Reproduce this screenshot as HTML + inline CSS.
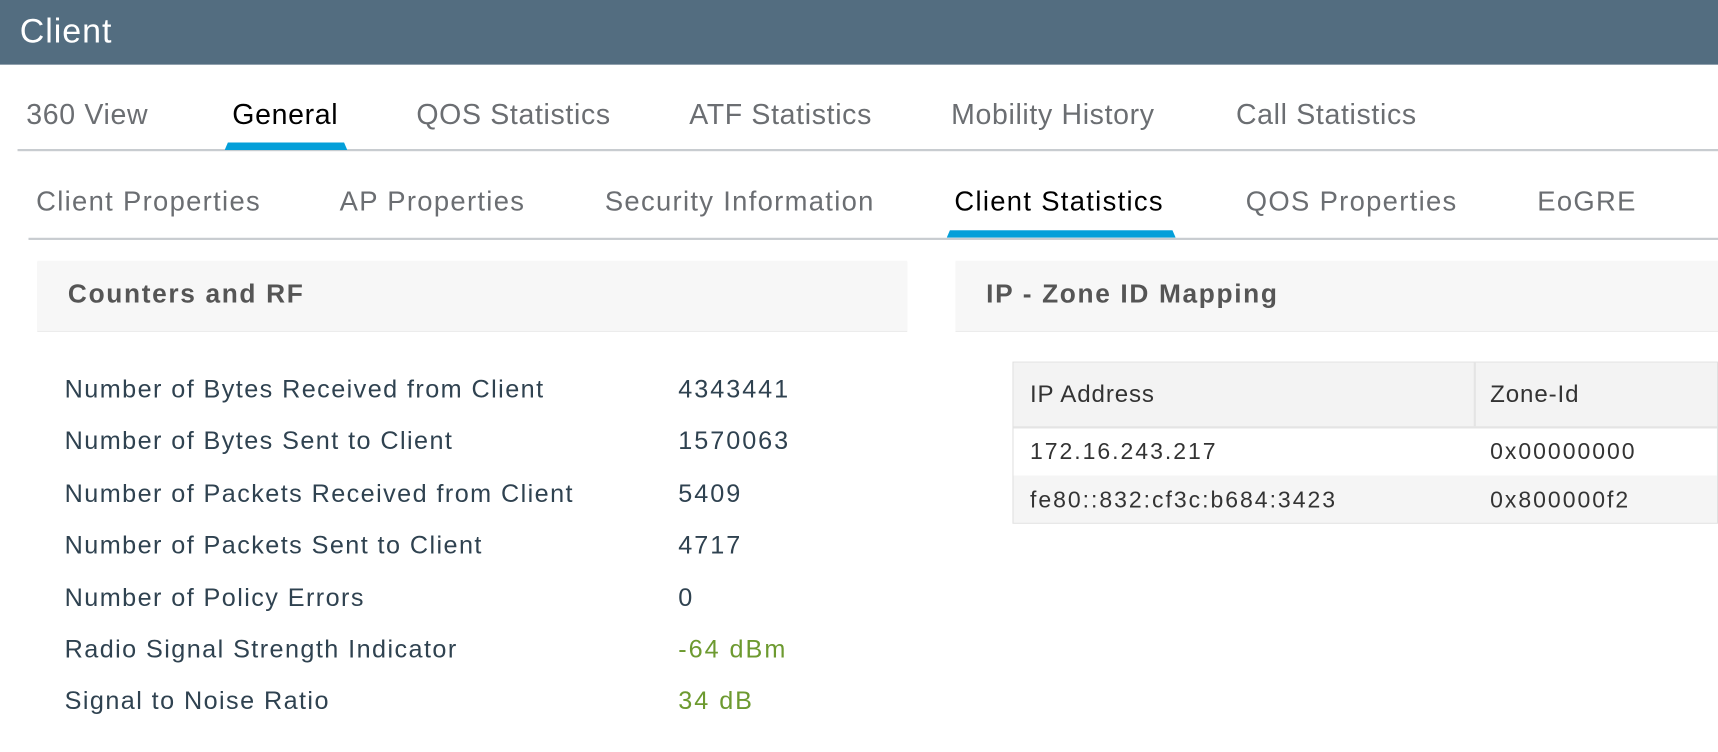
<!DOCTYPE html>
<html><head><style>
body{margin:0;width:1718px;height:751px;background:#fff;font-family:"Liberation Sans",sans-serif;position:relative;overflow:hidden}
#w{position:absolute;left:0;top:0;width:1568px;height:686px;transform:scale(1.0957);transform-origin:0 0}
#w div,#w span{position:absolute;white-space:nowrap}
.hdr{left:0;top:0;width:1568px;height:59px;background:#536d80;color:#fff;font-size:31px;letter-spacing:0.9px}
.t{font-size:26px;color:#6b6e72;top:89px;letter-spacing:0.6px}
.s{font-size:25px;color:#6b6e72;top:170px;letter-spacing:1.2px}
.l{font-size:23px;color:#2f4250;left:59px;letter-spacing:1.3px}
.v{font-size:23px;color:#2f4250;left:619px;letter-spacing:1.8px}
.g{color:#6d9a30!important}
.ph{background:#f7f7f7;height:64px;top:238px;box-shadow:0 1px 0 #ececec}
.pt{font-size:24px;font-weight:bold;color:#555;top:255px;letter-spacing:1.5px}
.c{font-size:21px;color:#333;letter-spacing:1.8px}
</style></head><body><div id="w">
<div class="hdr"><span style="left:18px;top:11px">Client</span></div>
<div class="t" style="left:24px">360 View</div>
<div class="t" style="left:212px;color:#000">General</div>
<div class="t" style="left:380px">QOS Statistics</div>
<div class="t" style="left:629px">ATF Statistics</div>
<div class="t" style="left:868px">Mobility History</div>
<div class="t" style="left:1128px">Call Statistics</div>
<div style="left:16px;top:136px;width:1552px;height:2px;background:#c8ccd0"></div>
<div style="left:205px;top:130px;width:112px;height:7px;background:#049fd9;clip-path:polygon(3px 0,109px 0,112px 100%,0 100%)"></div>
<div class="s" style="left:33px">Client Properties</div>
<div class="s" style="left:310px">AP Properties</div>
<div class="s" style="left:552px">Security Information</div>
<div class="s" style="left:871px;color:#000">Client Statistics</div>
<div class="s" style="left:1137px">QOS Properties</div>
<div class="s" style="left:1403px">EoGRE</div>
<div style="left:26px;top:217px;width:1542px;height:2px;background:#c8ccd0"></div>
<div style="left:864px;top:210px;width:209px;height:7px;background:#049fd9;clip-path:polygon(3px 0,206px 0,209px 100%,0 100%)"></div>
<div class="ph" style="left:34px;width:794px"></div>
<div class="pt" style="left:62px">Counters and RF</div>
<div class="ph" style="left:872px;width:696px"></div>
<div class="pt" style="left:900px">IP - Zone ID Mapping</div>
<div class="l" style="top:342px">Number of Bytes Received from Client</div><div class="v" style="top:342px">4343441</div>
<div class="l" style="top:389px">Number of Bytes Sent to Client</div><div class="v" style="top:389px">1570063</div>
<div class="l" style="top:437px">Number of Packets Received from Client</div><div class="v" style="top:437px">5409</div>
<div class="l" style="top:484px">Number of Packets Sent to Client</div><div class="v" style="top:484px">4717</div>
<div class="l" style="top:532px">Number of Policy Errors</div><div class="v" style="top:532px">0</div>
<div class="l" style="top:579px">Radio Signal Strength Indicator</div><div class="v g" style="top:579px">-64 dBm</div>
<div class="l" style="top:626px">Signal to Noise Ratio</div><div class="v g" style="top:626px">34 dB</div>
<div style="left:924px;top:330px;width:642px;height:146px;border:1px solid #e0e0e0"></div>
<div style="left:925px;top:331px;width:642px;height:58px;background:#f3f3f3;border-bottom:2px solid #e4e4e4"></div>
<div style="left:1345px;top:331px;width:2px;height:58px;background:#e4e4e4"></div>
<div style="left:925px;top:434px;width:642px;height:43px;background:#f5f5f5"></div>
<div class="c" style="left:940px;top:347px;font-size:22px;letter-spacing:0.8px">IP Address</div>
<div class="c" style="left:1360px;top:347px;font-size:22px;letter-spacing:0.8px">Zone-Id</div>
<div class="c" style="left:940px;top:401px">172.16.243.217</div>
<div class="c" style="left:1360px;top:401px">0x00000000</div>
<div class="c" style="left:940px;top:445px">fe80::832:cf3c:b684:3423</div>
<div class="c" style="left:1360px;top:445px">0x800000f2</div>
</div></body></html>
